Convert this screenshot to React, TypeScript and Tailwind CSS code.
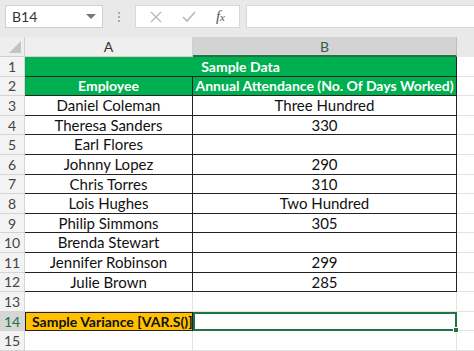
import React from 'react';

const rows: [string, string][] = [
  ['Daniel Coleman', 'Three Hundred'],
  ['Theresa Sanders', '330'],
  ['Earl Flores', ''],
  ['Johnny Lopez', '290'],
  ['Chris Torres', '310'],
  ['Lois Hughes', 'Two Hundred'],
  ['Philip Simmons', '305'],
  ['Brenda Stewart', ''],
  ['Jennifer Robinson', '299'],
  ['Julie Brown', '285'],
];

const RowHead = ({ n, active }: { n: number; active?: boolean }) => (
  <div
    className={`w-[25px] shrink-0 flex items-center justify-center border-r border-b border-[#d4d4d4] text-[14px] ${
      active ? 'bg-[#d6d6d6] text-[#217346]' : 'bg-[#f3f3f3] text-[#444]'
    }`}
  >
    {n}
  </div>
);

export default function App() {
  return (
    <div className="w-[474px] h-[351px] overflow-hidden bg-white text-[#111]" style={{ fontFamily: 'Lato, "Liberation Sans", sans-serif' }}>
      {/* formula bar */}
      <div className="h-[37px] bg-[#e9e9e9] flex items-start pt-[5px] pl-[5px]">
        <div className="w-[98px] h-[23px] bg-white border border-[#d0d0d0] flex items-center justify-between pl-[6px] pr-[6px] text-[14px] text-[#333]">
          <span>B14</span>
          <span className="w-0 h-0 border-l-[5px] border-r-[5px] border-t-[5px] border-l-transparent border-r-transparent border-t-[#777]" />
        </div>
        <div className="w-[32px] h-[23px] flex flex-col items-center justify-center gap-[2px]">
          <span className="w-[2px] h-[2px] bg-[#aaa]" />
          <span className="w-[2px] h-[2px] bg-[#aaa]" />
          <span className="w-[2px] h-[2px] bg-[#aaa]" />
        </div>
        <div className="w-[105px] h-[23px] bg-white border border-[#d8d8d8] flex items-center justify-around px-[4px]">
          <svg width="12" height="12" viewBox="0 0 12 12" stroke="#b8b8b8" strokeWidth="1.4" fill="none">
            <path d="M1 1L11 11M11 1L1 11" />
          </svg>
          <svg width="14" height="12" viewBox="0 0 14 12" stroke="#b8b8b8" strokeWidth="1.6" fill="none">
            <path d="M1 6L5 10L13 1" />
          </svg>
          <span className="text-[15px] italic text-[#555]" style={{ fontFamily: '"Liberation Serif", serif' }}>
            f<span className="text-[11px]">x</span>
          </span>
        </div>
        <div className="ml-[6px] flex-1 h-[23px] bg-white border border-[#d8d8d8] border-r-0" />
      </div>

      {/* column headers */}
      <div className="flex h-[20px] bg-[#e9e9e9]">
        <div className="w-[25px] shrink-0 bg-[#eeeeee] border-r border-b border-[#d0d0d0] flex items-end justify-end pr-[3px] pb-[3px]">
          <svg width="12" height="12" viewBox="0 0 12 12">
            <path d="M12 0L12 12L0 12Z" fill="#c4c4c4" />
          </svg>
        </div>
        <div className="w-[168px] shrink-0 bg-[#efefef] border-r border-b border-[#d0d0d0] flex items-center justify-center text-[14px] text-[#333]">A</div>
        <div className="w-[264px] shrink-0 bg-[#d3d3d3] border-r border-[#bdbdbd] border-b-2 border-b-[#217346] flex items-center justify-center text-[14px] text-[#2f5f44]">B</div>
        <div className="flex-1" />
      </div>

      {/* row 1 */}
      <div className="flex h-[19.6px]">
        <RowHead n={1} />
        <div className="w-[432px] shrink-0 bg-[#00b050] border-b border-r border-[#222] flex items-center justify-center text-white font-bold text-[14px]">
          Sample Data
        </div>
        <div className="flex-1 border-b border-[#e2e2e2]" />
      </div>
      {/* row 2 */}
      <div className="flex h-[19.6px]">
        <RowHead n={2} />
        <div className="w-[168px] shrink-0 bg-[#00b050] border-b border-r border-[#222] flex items-center justify-center text-white font-bold text-[14px]">
          Employee
        </div>
        <div className="w-[264px] shrink-0 bg-[#00b050] border-b border-r border-[#222] flex items-center justify-center text-white font-bold text-[14px] whitespace-nowrap">
          Annual Attendance (No. Of Days Worked)
        </div>
        <div className="flex-1 border-b border-[#e2e2e2]" />
      </div>
      {rows.map(([name, val], i) => (
        <div key={i} className="flex h-[19.6px]">
          <RowHead n={i + 3} />
          <div className="w-[168px] shrink-0 border-b border-r border-[#222] flex items-center justify-center text-[15px]">{name}</div>
          <div className="w-[264px] shrink-0 border-b border-r border-[#222] flex items-center justify-center text-[15px]">{val}</div>
          <div className="flex-1 border-b border-[#e2e2e2]" />
        </div>
      ))}
      {/* row 13 */}
      <div className="flex h-[19.6px]">
        <RowHead n={13} />
        <div className="w-[168px] shrink-0 border-b border-r border-[#e2e2e2]" />
        <div className="w-[264px] shrink-0 border-b border-r border-[#e2e2e2]" />
        <div className="flex-1 border-b border-[#e2e2e2]" />
      </div>
      {/* row 14 */}
      <div className="flex h-[19.6px]">
        <RowHead n={14} active />
        <div className="w-[168px] shrink-0 bg-[#ffc000] border border-[#222] flex items-center pl-[6px] text-[14px] font-bold whitespace-nowrap">
          Sample Variance [VAR.S()]
        </div>
        <div className="w-[264px] shrink-0 border-2 border-[#217346] relative">
          <span className="absolute -right-[4px] -bottom-[4px] w-[6px] h-[6px] bg-[#217346] border border-white" />
        </div>
        <div className="flex-1 border-b border-[#e2e2e2]" />
      </div>
      {/* row 15 */}
      <div className="flex h-[19.6px]">
        <RowHead n={15} />
        <div className="w-[168px] shrink-0 border-b border-r border-[#e2e2e2]" />
        <div className="w-[264px] shrink-0 border-b border-r border-[#e2e2e2]" />
        <div className="flex-1 border-b border-[#e2e2e2]" />
      </div>
    </div>
  );
}
